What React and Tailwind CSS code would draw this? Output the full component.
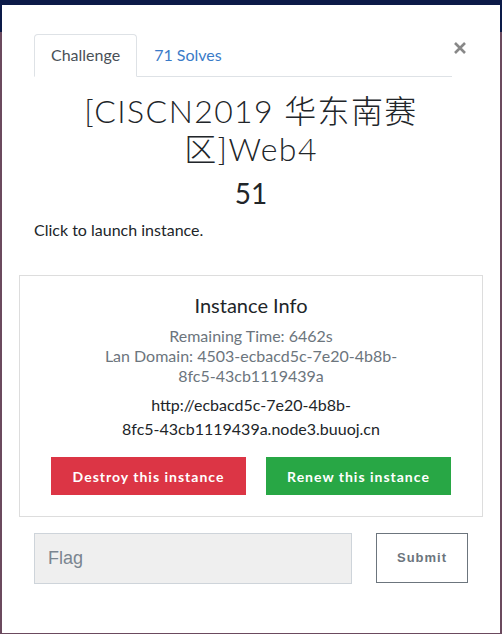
const lato = { fontFamily: "Lato, 'Noto Sans CJK SC', sans-serif" };

const CloseIcon = () => (
    <svg width="12" height="12" viewBox="0 0 12 12" className="block">
        <path d="M1 1 L11 11 M11 1 L1 11" stroke="#888888" strokeWidth="2.6" strokeLinecap="butt" />
    </svg>
);

const App = () => {
    return (
        <div className="w-[502px] h-[634px] overflow-hidden bg-[linear-gradient(to_bottom,#0c1a48_0px,#0c1a48_32px,#6b4a5e_32px)] pt-[5px]" style={lato}>

            <div className="ml-[2px] w-[498px] bg-white pb-[49px]">

                <div className="flex items-start pl-[32px] pr-[34px] pt-[29px]">
                    <div className="flex w-[419px] border-b border-[#dee2e6]">
                        <div className="-mb-px px-4 py-2 text-[16px] leading-[24px] text-[#495057] border border-[#dee2e6] border-b-white rounded-t-[4px] bg-white">
                            Challenge
                        </div>
                        <div className="px-4 py-2 text-[16px] leading-[24px] text-[#3a7bc8] border border-transparent">
                            71 Solves
                        </div>
                    </div>
                    <button className="ml-[2px] mt-[8px]">
                        <CloseIcon />
                    </button>
                </div>

                <div className="px-[32px]">

                    <h2 className="mt-[15px] text-center text-[32px] leading-[38px] font-light tracking-[1.4px] text-[#212529]">
                        [CISCN2019 华东南赛<br />区]Web4
                    </h2>

                    <h3 className="mt-[8px] text-center text-[28px] leading-[34px] text-[#212529]">
                        51
                    </h3>

                    <p className="mt-[8px] text-[16px] leading-[24px] text-[#212529]">
                        Click to launch instance.
                    </p>

                    <div className="mt-[33px] -mx-[15px] border border-[#dddddd] pt-[17px] pb-[21px] text-center">
                        <h4 className="text-[20px] leading-[24px] text-[#212529]">Instance Info</h4>

                        <div className="mt-[9px] text-[16px] leading-[20px] text-[#6c757d]">
                            <p>Remaining Time: 6462s</p>
                            <p>Lan Domain: 4503-ecbacd5c-7e20-4b8b-<br />8fc5-43cb1119439a</p>
                        </div>

                        <p className="mt-[7px] text-[16px] leading-[24px] text-[#212529]">
                            http://ecbacd5c-7e20-4b8b-<br />8fc5-43cb1119439a.node3.buuoj.cn
                        </p>

                        <div className="mt-[16px] flex justify-center gap-[20px]">
                            <button className="w-[195px] h-[38px] bg-[#dc3545] text-white text-[14px] font-bold tracking-[1px]">
                                Destroy this instance
                            </button>
                            <button className="w-[185px] h-[38px] bg-[#28a745] text-white text-[14px] font-bold tracking-[1px]">
                                Renew this instance
                            </button>
                        </div>
                    </div>

                    <div className="mt-[16px] flex items-start gap-[24px]">
                        <input
                            placeholder="Flag"
                            className="w-[318px] h-[51px] bg-[#efefef] border border-[#ced4da] pl-[13px] text-[18px] placeholder:text-[#7a8590] outline-none"
                            style={{ fontFamily: "'Liberation Sans', Arial, sans-serif" }}
                        />
                        <button
                            className="w-[92px] h-[50px] bg-white border border-[#6c757d] text-[#6c757d] text-[13px] font-bold tracking-[1px]"
                            style={{ fontFamily: "'Liberation Sans', Arial, sans-serif" }}
                        >
                            Submit
                        </button>
                    </div>
                </div>
            </div>
        </div>
    )
}

export default App
